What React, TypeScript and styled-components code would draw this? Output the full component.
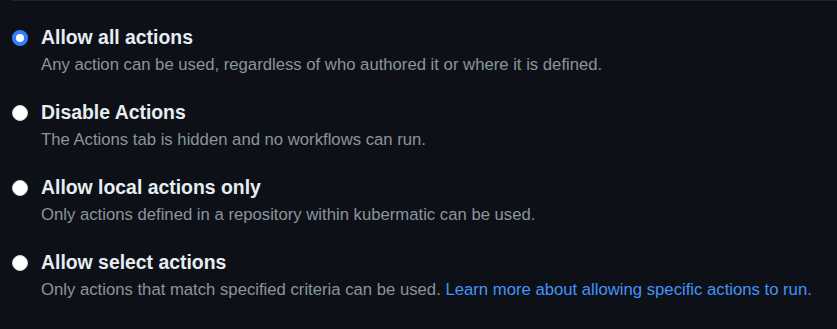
import React, { useState } from 'react';
import styled, { createGlobalStyle } from 'styled-components';

const GlobalStyle = createGlobalStyle`
  html, body {
    margin: 0;
    padding: 0;
    background: #0d1117;
  }
  body {
    font-family: "Liberation Sans", Arial, sans-serif;
  }
`;

interface Policy {
  id: string;
  title: string;
  description: string;
  link?: string;
}

const policies: Policy[] = [
  {
    id: 'all',
    title: 'Allow all actions',
    description: 'Any action can be used, regardless of who authored it or where it is defined.',
  },
  {
    id: 'disable',
    title: 'Disable Actions',
    description: 'The Actions tab is hidden and no workflows can run.',
  },
  {
    id: 'local',
    title: 'Allow local actions only',
    description: 'Only actions defined in a repository within kubermatic can be used.',
  },
  {
    id: 'select',
    title: 'Allow select actions',
    description: 'Only actions that match specified criteria can be used.',
    link: 'Learn more about allowing specific actions to run.',
  },
];

const Panel = styled.div`
  margin-left: 12px;
  border-top: 1px solid #21262d;
  padding-top: 23px;
  display: flex;
  flex-direction: column;
  gap: 23px;
`;

const Option = styled.label`
  display: flex;
  align-items: flex-start;
  gap: 13px;
  cursor: pointer;
`;

const Radio = styled.span<{ $checked: boolean }>`
  flex: none;
  width: 16px;
  height: 16px;
  margin-top: 6px;
  border-radius: 50%;
  box-sizing: border-box;
  background: #ffffff;
  border: ${(p) => (p.$checked ? '4px solid #2f81f7' : '1px solid #d0d7de')};
`;

const Text = styled.div`
  display: flex;
  flex-direction: column;
  gap: 4px;
`;

const Title = styled.div`
  font-size: 19.4px;
  line-height: 26px;
  font-weight: 700;
  color: #e6edf3;
`;

const Description = styled.div`
  font-size: 16.7px;
  line-height: 22px;
  color: #8b949e;
`;

const Link = styled.a`
  color: #4493f8;
  text-decoration: none;
`;

export default function App() {
  const [selected, setSelected] = useState('all');
  return (
    <>
      <GlobalStyle />
      <Panel>
        {policies.map((p) => (
          <Option key={p.id} onClick={() => setSelected(p.id)}>
            <Radio $checked={selected === p.id} />
            <Text>
              <Title>{p.title}</Title>
              <Description>
                {p.description}
                {p.link && (
                  <>
                    {' '}
                    <Link href="#">{p.link}</Link>
                  </>
                )}
              </Description>
            </Text>
          </Option>
        ))}
      </Panel>
    </>
  );
}
